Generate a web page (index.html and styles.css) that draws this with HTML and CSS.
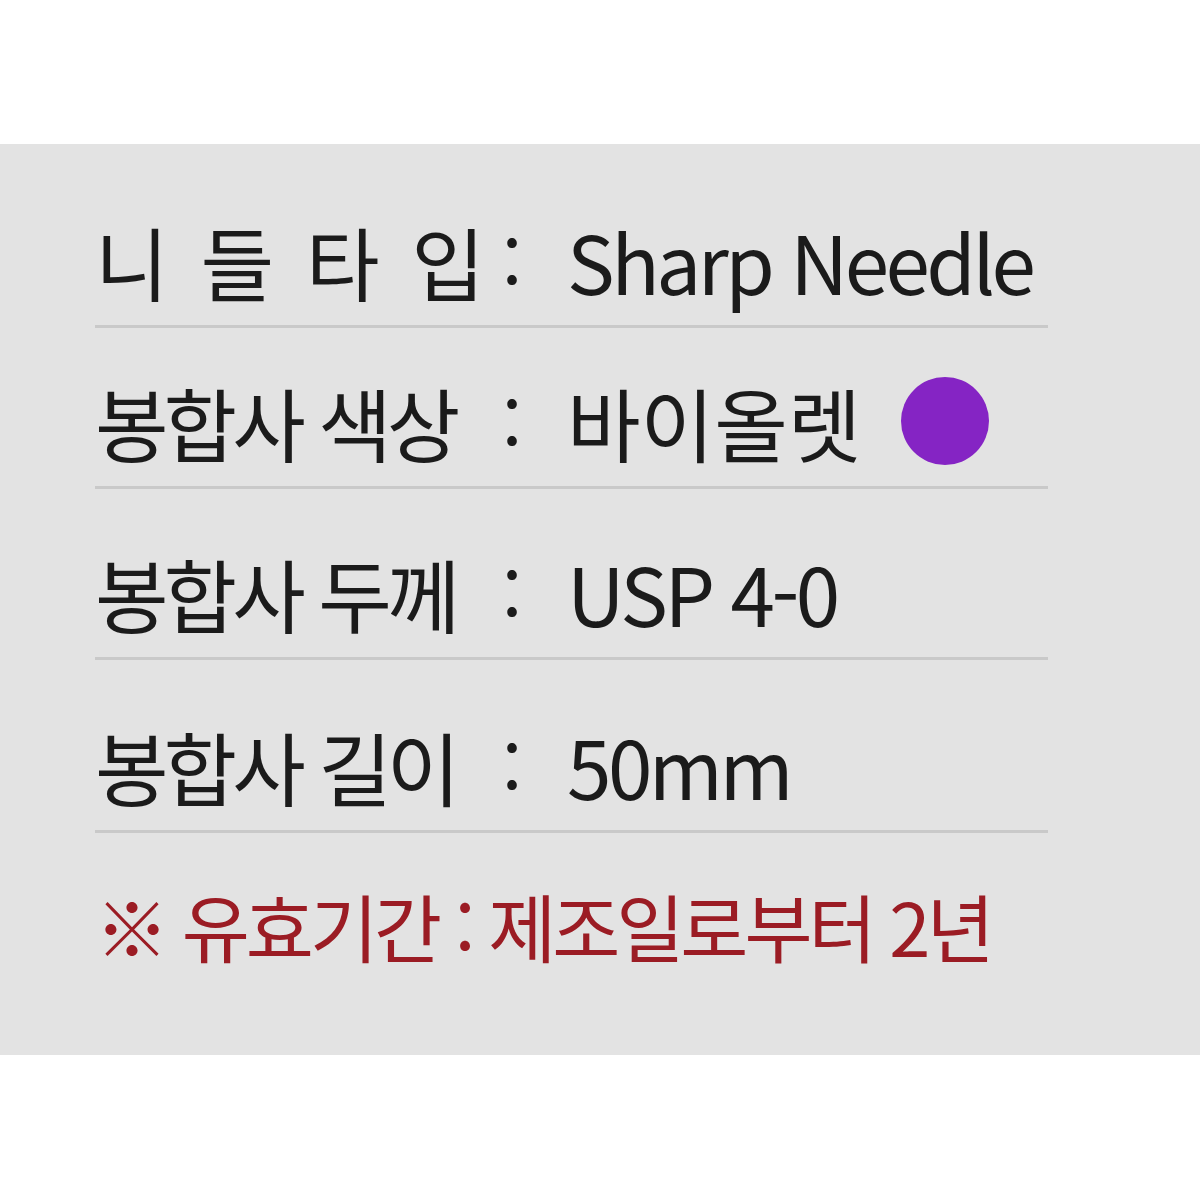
FILE: index.html
```html
<!DOCTYPE html>
<html lang="ko">
<head>
<meta charset="utf-8">
<link rel="stylesheet" href="styles.css">
</head>
<body>
<div class="panel">
  <div class="row row-1">
    <div class="label spread"><span>니</span><span>들</span><span>타</span><span>입</span></div>
    <div class="colon">:</div>
    <div class="value latin">Sharp Needle</div>
  </div>
  <div class="row row-2">
    <div class="label">봉합사 색상</div>
    <div class="colon">:</div>
    <div class="value ko">바이올렛 <span class="dot"></span></div>
  </div>
  <div class="row row-3">
    <div class="label">봉합사 두께</div>
    <div class="colon">:</div>
    <div class="value latin">USP 4-0</div>
  </div>
  <div class="row row-4">
    <div class="label">봉합사 길이</div>
    <div class="colon">:</div>
    <div class="value latin">50mm</div>
  </div>
  <div class="note">※ 유효기간 : 제조일로부터 2년</div>
</div>
</body>
</html>
```
FILE: styles.css
```css
html, body {
  margin: 0;
  padding: 0;
  background: #ffffff;
}
body {
  font-family: "Noto Sans CJK KR", "Noto Sans", sans-serif;
  color: #1b1b1b;
  padding-top: 144px;
  height: 1200px;
  box-sizing: border-box;
}
.panel {
  background: #e3e3e3;
  height: 911px;
  box-sizing: border-box;
  padding: 14px 152px 0 95px;
}
.row {
  display: flex;
  align-items: flex-end;
  height: 170px;
  box-sizing: border-box;
  padding-bottom: 15px;
  border-bottom: 3px solid #c9c9c9;
}
.row-2 { height: 161px; }
.row-3 { height: 171px; }
.row-4 { height: 173px; }
.label {
  flex-shrink: 0;
  width: 395px;
  font-size: 80px;
  line-height: 100px;
  letter-spacing: -5px;
  white-space: nowrap;
}
.spread {
  display: flex;
  justify-content: space-between;
  width: 390px;
  padding-right: 5px;
  letter-spacing: 0;
}
.colon {
  flex-shrink: 0;
  width: 77px;
  font-size: 72px;
  line-height: 100px;
  text-align: left;
  padding-left: 12px;
  box-sizing: border-box;
}
.value {
  font-size: 80px;
  line-height: 100px;
  white-space: nowrap;
  display: flex;
  align-items: center;
}
.value.latin {
  letter-spacing: -3.5px;
}
.value.ko {
  letter-spacing: 0;
}
.dot {
  display: inline-block;
  width: 88px;
  height: 88px;
  border-radius: 50%;
  background: #8524c4;
  margin-left: 40px;
}
.note {
  color: #9b1c24;
  font-size: 74px;
  line-height: 100px;
  letter-spacing: -4px;
  margin-top: 42px;
  white-space: nowrap;
}
```
